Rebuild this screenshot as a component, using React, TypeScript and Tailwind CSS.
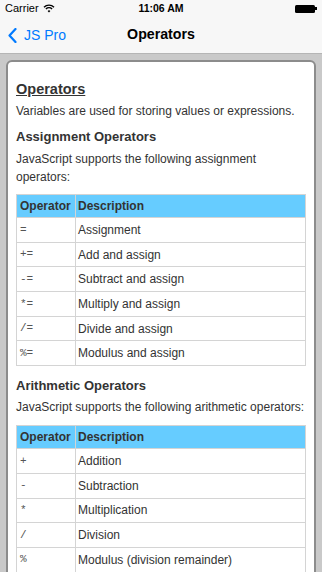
import React from 'react'

const assignment = [
  ['=', 'Assignment'],
  ['+=', 'Add and assign'],
  ['-=', 'Subtract and assign'],
  ['*=', 'Multiply and assign'],
  ['/=', 'Divide and assign'],
  ['%=', 'Modulus and assign'],
]

const arithmetic = [
  ['+', 'Addition'],
  ['-', 'Subtraction'],
  ['*', 'Multiplication'],
  ['/', 'Division'],
  ['%', 'Modulus (division remainder)'],
]

const OpTable = ({ rows }: { rows: string[][] }) => (
  <table className="w-full border-collapse text-[12px] text-[#333]">
    <thead>
      <tr className="bg-[#66ccff] h-[23px]">
        <th className="w-[59px] border border-[#d4d4d4] pl-[3px] text-left font-bold">Operator</th>
        <th className="border border-[#d4d4d4] pl-[2px] text-left font-bold">Description</th>
      </tr>
    </thead>
    <tbody>
      {rows.map(([op, desc]) => (
        <tr key={op} className="h-[24.7px]">
          <td className="border border-[#d4d4d4] pl-[3px] font-['Liberation_Mono',monospace] text-[11px] text-[#555]">{op}</td>
          <td className="border border-[#d4d4d4] pl-[2px]">{desc}</td>
        </tr>
      ))}
    </tbody>
  </table>
)

export default function App() {
  return (
    <div className="w-[322px] h-[572px] overflow-hidden bg-[#c9c9c9] font-['Liberation_Sans',Arial,sans-serif] flex flex-col">
      <div className="bg-[#f7f7f7] border-b border-[#b5b5b5] shrink-0">
        <div className="h-[17px] flex items-center justify-between px-[5px] text-[11px] text-black">
          <div className="flex items-center gap-[4px] w-[80px]">
            <span>Carrier</span>
            <svg width="12" height="9" viewBox="0 0 12 9">
              <path d="M1 3.2 A7 7 0 0 1 11 3.2" stroke="black" strokeWidth="1.4" fill="none" />
              <path d="M2.9 5.1 A4.4 4.4 0 0 1 9.1 5.1" stroke="black" strokeWidth="1.4" fill="none" />
              <path d="M4.6 6.9 A2 2 0 0 1 7.4 6.9 L6 8.5 Z" fill="black" />
            </svg>
          </div>
          <span className="font-bold text-[10.5px]">11:06 AM</span>
          <div className="w-[80px] flex justify-end">
            <div className="flex items-center">
              <div className="w-[20px] h-[8px] bg-black rounded-[1.5px]" />
              <div className="w-[1.5px] h-[3px] bg-black" />
            </div>
          </div>
        </div>
        <div className="h-[36px] flex items-center relative">
          <div className="flex items-center pl-[8px] text-[#007aff] text-[14px]">
            <svg width="9" height="15" viewBox="0 0 9 15" className="mr-[7px]">
              <path d="M7.5 1 L1.5 7.5 L7.5 14" stroke="#007aff" strokeWidth="2.2" fill="none" strokeLinecap="round" strokeLinejoin="round" />
            </svg>
            JS Pro
          </div>
          <div className="absolute inset-0 flex items-center justify-center text-[14.2px] font-bold text-black pointer-events-none">
            Operators
          </div>
        </div>
      </div>

      <div className="px-[6px] pt-[6px]">
        <div className="bg-white border-2 border-[#8c8c8c] rounded-[6px] px-[8px] pt-[17px] pb-[20px] text-[#333]">
          <h1 className="text-[14.5px] font-bold underline leading-[20px]">Operators</h1>
          <p className="text-[12px] leading-[18px] mt-[3px]">Variables are used for storing values or expressions.</p>
          <h2 className="text-[13px] font-bold leading-[18px] mt-[8px]">Assignment Operators</h2>
          <p className="text-[12px] leading-[18px] mt-[4px] mb-[8px]">JavaScript supports the following assignment operators:</p>
          <OpTable rows={assignment} />
          <h2 className="text-[13px] font-bold leading-[18px] mt-[11px]">Arithmetic Operators</h2>
          <p className="text-[12px] leading-[18px] mt-[3px] mb-[9px]">JavaScript supports the following arithmetic operators:</p>
          <OpTable rows={arithmetic} />
        </div>
      </div>
    </div>
  )
}
